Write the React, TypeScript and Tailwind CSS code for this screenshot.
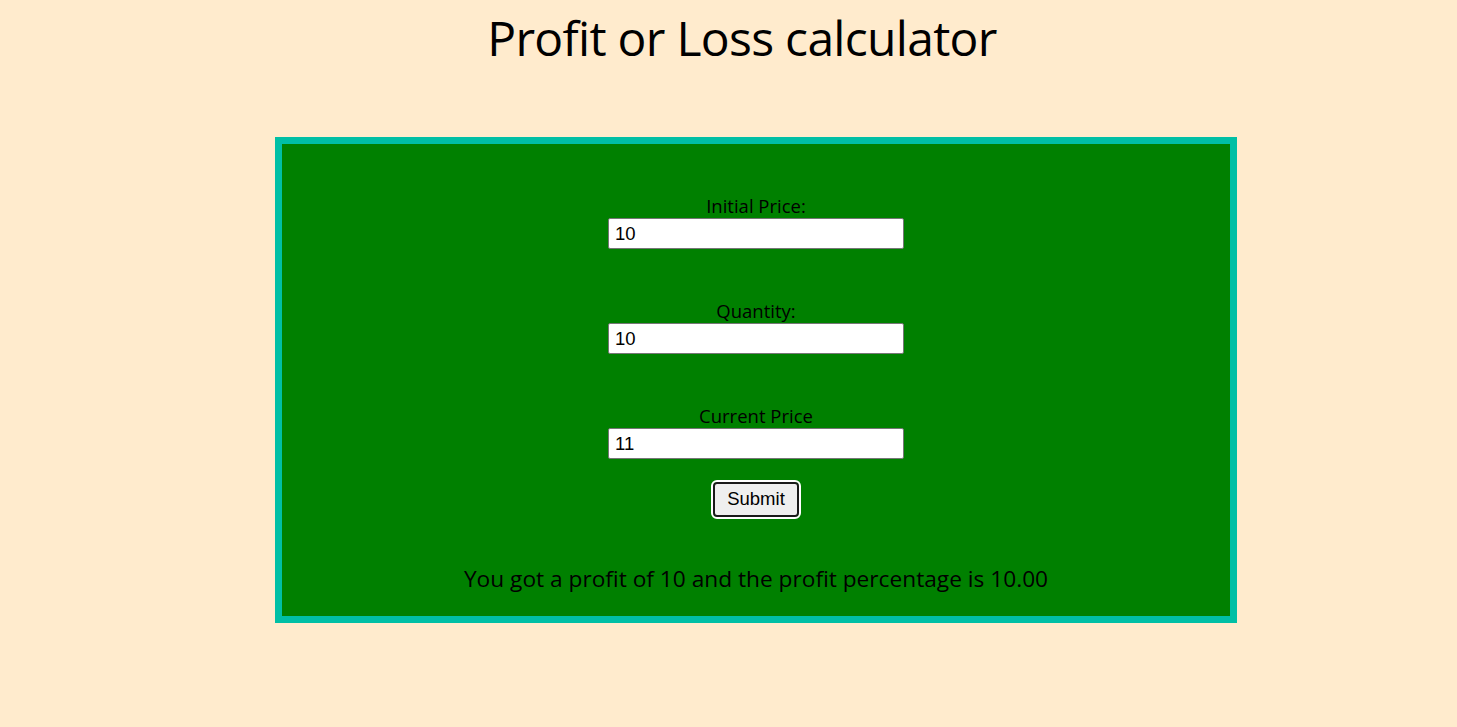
import React, { useState } from 'react';

function Field({ label, value }: { label: string; value: string }) {
  return (
    <div className="flex flex-col items-center">
      <label className="text-[18.5px] leading-[24px] text-black">{label}</label>
      <input
        type="text"
        defaultValue={value}
        className="w-[296px] h-[31px] bg-white border border-[#767676] rounded-[2px] px-[6px] text-[18.5px] text-black outline-none"
        style={{ fontFamily: '"Liberation Sans", Arial, sans-serif' }}
      />
    </div>
  );
}

export default function App() {
  const [result] = useState('You got a profit of 10 and the profit percentage is 10.00');

  return (
    <div
      className="min-h-[727px] bg-[#ffebcd] text-black"
      style={{ fontFamily: '"Open Sans", "Noto Sans", sans-serif' }}
    >
      <h1 className="flex justify-center pl-[27px] pt-[8px] text-[48px] leading-[60px] tracking-[-0.7px]">
        Profit or Loss calculator
      </h1>

      <div className="ml-[275px] mt-[69px] w-[962px] h-[486px] border-[7px] border-[#00bfa5] bg-[#008000] flex flex-col items-center pt-[50px]">
        <div className="flex flex-col gap-[50px]">
          <Field label="Initial Price:" value="10" />
          <Field label="Quantity:" value="10" />
          <Field label="Current Price" value="11" />
        </div>
        <button
          className="mt-[23px] h-[35px] px-[12px] bg-[#efefef] border-2 border-[#1a1a1a] rounded-[4px] outline outline-2 outline-white text-[18.5px] leading-none"
          style={{ fontFamily: '"Liberation Sans", Arial, sans-serif' }}
        >
          Submit
        </button>
        <p className="mt-[48px] text-[22.7px] leading-[28px]">{result}</p>
      </div>
    </div>
  );
}
